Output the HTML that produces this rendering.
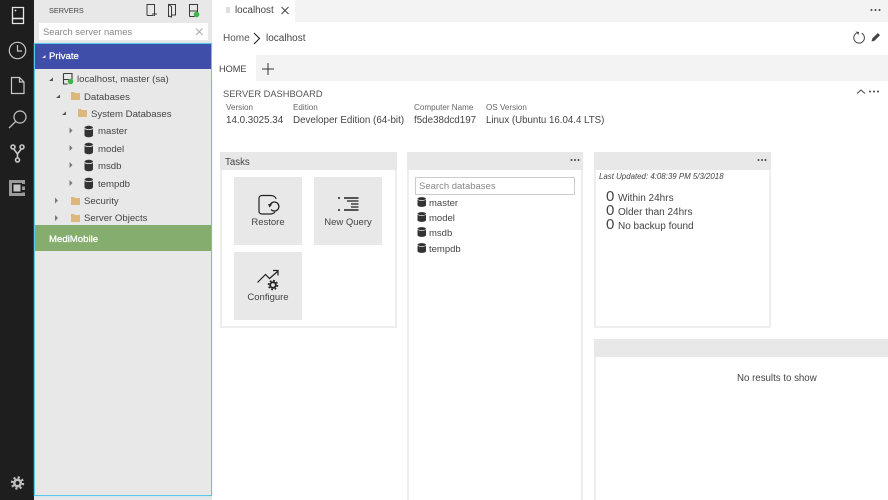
<!DOCTYPE html>
<html><head><meta charset="utf-8">
<style>
html,body{margin:0;padding:0;background:#fff}
#r{position:relative;width:888px;height:500px;overflow:hidden;background:#fff;font-family:"Liberation Sans",sans-serif;color:#444}
#r div,#r svg,#r span{position:absolute}
.t{white-space:nowrap;line-height:14px;height:14px}
.s{font-size:9.6px;color:#444}
.b{background:#e8e8e8}
.w{font-size:9.600px;color:#fff;-webkit-text-stroke:.25px #fff}
</style></head><body>
<div id="r">
<div style="left:0;top:0;width:34px;height:500px;background:#1e1e1e"></div>
<div class="b" style="left:34px;top:0;width:178px;height:500px"></div>
<div style="left:34px;top:43px;width:176px;height:451px;border:1px solid #5cc6ec;box-shadow:0 0 1px #9fe2f8"></div>
<div style="left:35px;top:44px;width:176px;height:25px;background:#3f4ea8"></div>
<div style="left:35px;top:225px;width:176px;height:26px;background:#85ad6e"></div>
<div style="left:39px;top:23px;width:169px;height:17px;background:#fff"></div>

<div class="t" style="left:49px;top:4px;font-size:7.3px;color:#444">SERVERS</div>
<div class="t" style="left:43px;top:25px;font-size:9.4px;color:#888">Search server names</div>
<div class="t w" style="left:49px;top:50px">Private</div>
<div class="t w" style="left:49px;top:233px">MediMobile</div>
<div class="t s" style="left:77px;top:73px">localhost, master (sa)</div>
<div class="t s" style="left:84px;top:91px">Databases</div>
<div class="t s" style="left:91px;top:108px">System Databases</div>
<div class="t s" style="left:98px;top:125px">master</div>
<div class="t s" style="left:98px;top:143px">model</div>
<div class="t s" style="left:98px;top:160px">msdb</div>
<div class="t s" style="left:98px;top:178px">tempdb</div>
<div class="t s" style="left:84px;top:195px">Security</div>
<div class="t s" style="left:84px;top:212px">Server Objects</div>

<svg style="left:0;top:0" width="212" height="500" viewBox="0 0 212 500" fill="none">
<path d="M12.500 7.500h11v16h-11z" stroke="#e6e6e6" stroke-width="1.300"/><path d="M12.500 18.500h11" stroke="#e6e6e6" stroke-width="1.600"/>
<circle cx="15.500" cy="10.500" r=".9" fill="#e6e6e6"/>
<g stroke="#c8c8c8" stroke-width="1.200">
<circle cx="17.500" cy="50.500" r="8.200"/><path d="M17.500 45v6h4.500"/>
<path d="M11.500 77.500h8l4.500 4.500v11.500h-12.500zM19.500 77.500v4.500h4.500"/>
<circle cx="20" cy="117" r="6"/><path d="M15.800 121.300l-6.800 6.800"/>
</g>
<g stroke="#c8c8c8" stroke-width="1.600">
<circle cx="13" cy="147" r="2"/><circle cx="22" cy="147" r="2"/><circle cx="17.500" cy="160" r="2"/><path d="M13.800 149l3.700 5 3.700-5M17.500 154v4"/>
</g>
<rect x="9" y="180" width="16" height="16" fill="#9a9a9a"/><rect x="12" y="183" width="10" height="10" fill="#1e1e1e"/><rect x="13.500" y="184.500" width="7" height="7" fill="#c4c4c4"/>
<path d="M22 184h3v2.500h-3zM22 190h3v2.500h-3z" fill="#1e1e1e"/>
<circle cx="17.500" cy="483" r="3.200" stroke="#c0c0c0" stroke-width="2.500"/><circle cx="17.500" cy="483" r="5.500" stroke="#c0c0c0" stroke-width="2.400" stroke-dasharray="2.100 2.220"/>

<g stroke="#3a3a3a" stroke-width="1">
<path d="M147 15.500v-11h7.500v7M147 15.500h6.500M154.500 11v5M152 14h5"/>
<path d="M168.500 17v-12.500h7v10.500h-4M168.500 4.500l3 2v10.500l-3-1z"/>
<path d="M189.500 16.500v-12h8v9M189.500 11h8M189.500 16.500h5"/>
</g>
<circle cx="196.500" cy="14.500" r="2.800" fill="#3fb54a"/>
<path d="M196 28.500l6.500 6.500M202.500 28.500l-6.500 6.500" stroke="#aaa" stroke-width="1"/>
<path d="M42 58l3.500-3v3z" fill="#e6e6f2"/>
<path d="M49 81l4-3.500v3.500zM56 98l4-3.500v3.500zM62 115l4-3.500v3.500z" fill="#555"/>
<path d="M69.500 127.500l3 3-3 3zM69.500 145l3 3-3 3zM69.500 162l3 3-3 3zM69.500 180l3 3-3 3zM55 197.500l3 3-3 3zM55 215l3 3-3 3z" fill="#777"/>
<path d="M63.500 73.500h8.500v6M63.500 73.500v10.500h4" stroke="#3a3a3a" stroke-width="1.100"/><path d="M63.500 79.500h8" stroke="#3a3a3a"/>
<circle cx="70.500" cy="81.500" r="2.800" fill="#3fb54a"/>
<g fill="#dcb87c"><path d="M71 92h3l1 1h5v7h-9z"/><path d="M78 109h3l1 1h5v7h-9z"/><path d="M71 197h3l1 1h5v7h-9z"/><path d="M71 214h3l1 1h5v7h-9z"/></g>
<g fill="#333"><path d="M84.500 128c0-3 8.500-3 8.500 0v7c0 3-8.500 3-8.500 0z"/><path d="M84.500 145c0-3 8.500-3 8.500 0v7c0 3-8.500 3-8.500 0z"/><path d="M84.500 162c0-3 8.500-3 8.500 0v7c0 3-8.500 3-8.500 0z"/><path d="M84.500 180c0-3 8.500-3 8.500 0v7c0 3-8.500 3-8.500 0z"/></g>
<g stroke="#e8e8e8" stroke-width=".8"><path d="M84.500 128.500c2 1.500 6.500 1.500 8.500 0M84.500 145.500c2 1.500 6.500 1.500 8.500 0M84.500 162.500c2 1.500 6.500 1.500 8.500 0M84.500 180.500c2 1.500 6.500 1.500 8.500 0"/></g>
</svg>

<!-- main -->
<div style="left:212px;top:0;width:676px;height:22px;background:#f3f3f3"></div>
<div style="left:212px;top:0;width:83px;height:22px;background:#fff"></div>
<div class="t" style="left:235px;top:4px;font-size:9.800px;color:#444">localhost</div>
<div class="t" style="left:223px;top:32px;font-size:10px;color:#555">Home</div>
<div class="t" style="left:266px;top:32px;font-size:10px;color:#444">localhost</div>
<div style="left:212px;top:55px;width:676px;height:26px;background:#f3f3f3"></div>
<div style="left:212px;top:55px;width:44px;height:26px;background:#fff"></div>
<div class="t" style="left:219px;top:62px;font-size:9.200px;color:#444">HOME</div>
<div class="t" style="left:223px;top:87px;font-size:9.300px;color:#555">SERVER DASHBOARD</div>

<div class="t" style="left:226px;top:101px;font-size:8.100px;color:#666">Version</div>
<div class="t" style="left:293px;top:101px;font-size:8.100px;color:#666">Edition</div>
<div class="t" style="left:414px;top:101px;font-size:8.100px;color:#666">Computer Name</div>
<div class="t" style="left:486px;top:101px;font-size:8.100px;color:#666">OS Version</div>
<div class="t" style="left:226px;top:114px;font-size:9.800px;color:#444">14.0.3025.34</div>
<div class="t" style="left:293px;top:114px;font-size:9.800px;color:#444">Developer Edition (64-bit)</div>
<div class="t" style="left:414px;top:114px;font-size:9.800px;color:#444">f5de38dcd197</div>
<div class="t" style="left:486px;top:114px;font-size:9.700px;color:#444">Linux (Ubuntu 16.04.4 LTS)</div>

<!-- Tasks panel -->
<div style="left:220px;top:152px;width:173px;height:174px;border:2px solid #eee;border-top:0"></div>
<div class="b" style="left:220px;top:152px;width:177px;height:18px"></div>
<div class="t" style="left:225px;top:156px;font-size:9.700px;color:#444">Tasks</div>
<div class="b" style="left:234px;top:177px;width:68px;height:68px"></div>
<div class="b" style="left:314px;top:177px;width:68px;height:68px"></div>
<div class="b" style="left:234px;top:252px;width:68px;height:68px"></div>
<div class="t" style="left:234px;top:216px;width:68px;text-align:center;font-size:9.500px;color:#444">Restore</div>
<div class="t" style="left:314px;top:216px;width:68px;text-align:center;font-size:9.500px;color:#444">New Query</div>
<div class="t" style="left:234px;top:291px;width:68px;text-align:center;font-size:9.500px;color:#444">Configure</div>

<!-- DB panel -->
<div style="left:407px;top:152px;width:172px;height:352px;border:2px solid #eee;border-top:0"></div>
<div class="b" style="left:407px;top:152px;width:176px;height:18px"></div>
<div style="left:415px;top:177px;width:158px;height:16px;border:1px solid #ccc;background:#fff"></div>
<div class="t" style="left:419px;top:180px;font-size:9.500px;color:#888">Search databases</div>
<div class="t s" style="left:429px;top:197px;font-size:9.500px">master</div>
<div class="t s" style="left:429px;top:212px;font-size:9.500px">model</div>
<div class="t s" style="left:429px;top:227px;font-size:9.500px">msdb</div>
<div class="t s" style="left:429px;top:243px;font-size:9.500px">tempdb</div>

<!-- Backup panel -->
<div style="left:594px;top:152px;width:173px;height:174px;border:2px solid #eee;border-top:0"></div>
<div class="b" style="left:594px;top:152px;width:177px;height:18px"></div>
<div class="t" style="left:599px;top:170px;font-size:7.900px;font-style:italic;color:#444">Last Updated: 4:08:39 PM 5/3/2018</div>
<div class="t" style="left:606px;top:190px;font-size:15px;color:#444">0</div>
<div class="t" style="left:606px;top:204px;font-size:15px;color:#444">0</div>
<div class="t" style="left:606px;top:218px;font-size:15px;color:#444">0</div>
<div class="t" style="left:618px;top:192px;font-size:10px;color:#444">Within 24hrs</div>
<div class="t" style="left:618px;top:206px;font-size:10px;color:#444">Older than 24hrs</div>
<div class="t" style="left:618px;top:220px;font-size:10px;color:#444">No backup found</div>

<!-- No results panel -->
<div style="left:594px;top:339px;width:292px;height:165px;border-left:2px solid #eee"></div>
<div class="b" style="left:594px;top:339px;width:294px;height:18px"></div>
<div class="t" style="left:737px;top:372px;font-size:9.700px;color:#444">No results to show</div>

<svg style="left:212px;top:0" width="676" height="340" viewBox="212 0 676 340" fill="none">
<path d="M226 8h4M226 10h4M226 12h4" stroke="#aaa" stroke-width=".8"/>
<path d="M281.500 7l7 7M288.500 7l-7 7" stroke="#444" stroke-width="1"/>
<g fill="#444"><circle cx="871.500" cy="10" r="1"/><circle cx="875.500" cy="10" r="1"/><circle cx="879.500" cy="10" r="1"/>
<circle cx="870" cy="91.500" r="1"/><circle cx="874" cy="91.500" r="1"/><circle cx="878" cy="91.500" r="1"/>
<circle cx="571.500" cy="160" r="1"/><circle cx="575" cy="160" r="1"/><circle cx="578.500" cy="160" r="1"/>
<circle cx="758.500" cy="160" r="1"/><circle cx="762" cy="160" r="1"/><circle cx="765.500" cy="160" r="1"/></g>
<path d="M254 33l5.500 5.500-5.500 5.500" stroke="#222" stroke-width="1.100"/>
<path d="M262 69h12M268 63v12" stroke="#333" stroke-width="1"/>
<path d="M857 93.500l4-3.500 4 3.500" stroke="#444" stroke-width="1"/>
<path d="M856.500 33.200a5.300 5.300 0 1 0 5.200 0" stroke="#444" stroke-width="1"/><path d="M855.500 31.500l3.500.5-.5 3z" fill="#444"/>
<path d="M871.500 41.500l.8-3 5.500-5.500 2.200 2.200-5.500 5.500z" fill="#444"/>
<!-- restore -->
<path d="M262 195.500h9c3 0 5 2 5 3.500M259 198.500c0-2 1.500-3 3-3M259 198.500v13c0 1.500 1.500 2.500 3 2.500h9c2 0 3-1 4-2" stroke="#222" stroke-width="1.200"/>
<path d="M270 205.500a4.500 4.500 0 1 1 1 4" stroke="#222" stroke-width="1.300"/><path d="M268 204l4 .5-2.500 3z" fill="#222"/>
<!-- new query -->
<path d="M344 198h14.500M344 210h14.500" stroke="#222" stroke-width="1.400"/><path d="M347 201h11.500M351 204h7.500M351 207h7.500" stroke="#222" stroke-width="1.300"/>
<path d="M338 198h2M338 210h2" stroke="#222" stroke-width="1.500"/>
<!-- configure -->
<path d="M257.500 282.500l8-8 4 4 8-7M273 270.500h5v5" stroke="#222" stroke-width="1.200"/>
<circle cx="273" cy="285" r="2.800" stroke="#222" stroke-width="1.800"/><circle cx="273" cy="285" r="4.500" stroke="#222" stroke-width="1.500" stroke-dasharray="1.800 1.730"/>
<!-- db icons -->
<g fill="#333"><path d="M417.500 199c0-2.500 8.500-2.500 8.500 0v6c0 2.500-8.500 2.500-8.500 0z"/><path d="M417.500 214c0-2.500 8.500-2.500 8.500 0v6c0 2.500-8.500 2.500-8.500 0z"/><path d="M417.500 229c0-2.500 8.500-2.500 8.500 0v6c0 2.500-8.500 2.500-8.500 0z"/><path d="M417.500 245c0-2.500 8.500-2.500 8.500 0v6c0 2.500-8.500 2.500-8.500 0z"/></g>
<path d="M417.500 199.500c2 1.300 6.500 1.300 8.500 0M417.500 214.500c2 1.300 6.500 1.300 8.500 0M417.500 229.500c2 1.300 6.500 1.300 8.500 0M417.500 245.500c2 1.300 6.500 1.300 8.500 0" stroke="#fff" stroke-width=".7"/>
</svg>
</div>
</body></html>
